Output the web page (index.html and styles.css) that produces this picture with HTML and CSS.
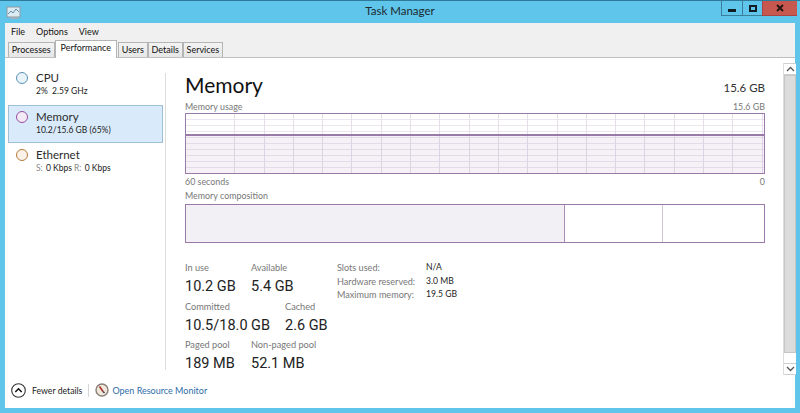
FILE: index.html
```html
<!DOCTYPE html>
<html lang="en">
<head>
<meta charset="utf-8">
<title>Task Manager</title>
<link rel="stylesheet" href="styles.css">
</head>
<body>
<header class="titlebar">
  <div class="title-left">
    <svg class="app-icon" width="16" height="14" viewBox="0 0 16 14"><rect x="1" y="1" width="13" height="10" fill="#dcebf2" stroke="#8b9aa5"/><path d="M2 8l3-3 2 2 3-4 3 3" fill="none" stroke="#5b8fb0"/><rect x="4" y="11" width="8" height="2" fill="#9fb0ba"/></svg>
  </div>
  <div class="title-text">Task Manager</div>
  <div class="controls">
    <div class="ctl"><span class="ctl-min"></span></div>
    <div class="ctl ctl-mx"><span class="ctl-max"></span></div>
    <div class="ctl ctl-close"><svg width="8" height="8" viewBox="0 0 8 8"><path d="M1 1l6 6M7 1l-6 6" stroke="#2a1512" stroke-width="2"/></svg></div>
  </div>
</header>
<div class="window">
  <nav class="menu"><span>File</span><span>Options</span><span>View</span></nav>
  <div class="tabs">
    <div class="tab">Processes</div>
    <div class="tab active">Performance</div>
    <div class="tab">Users</div>
    <div class="tab">Details</div>
    <div class="tab">Services</div>
  </div>
  <div class="content">
    <aside class="side">
      <div class="item">
        <span class="dot dot-cpu"></span>
        <div><div class="item-name">CPU</div><div class="item-sub">2%&nbsp; 2.59 GHz</div></div>
      </div>
      <div class="item selected">
        <span class="dot dot-mem"></span>
        <div><div class="item-name">Memory</div><div class="item-sub">10.2/15.6 GB (65%)</div></div>
      </div>
      <div class="item">
        <span class="dot dot-eth"></span>
        <div><div class="item-name">Ethernet</div><div class="item-sub"><i>S:</i> 0 Kbps <i>R:</i> 0 Kbps</div></div>
      </div>
    </aside>
    <div class="divider"></div>
    <main class="main">
      <div class="head"><h1>Memory</h1><div class="total">15.6 GB</div></div>
      <div class="cap cap-usage"><span>Memory usage</span><span>15.6 GB</span></div>
      <div class="graph"><div class="graph-fill"></div></div>
      <div class="cap cap-time"><span>60 seconds</span><span>0</span></div>
      <div class="cap cap-comp"><span>Memory composition</span></div>
      <div class="comp"><div class="c1"></div><div class="c2"></div><div class="c3"></div></div>
      <section class="stats">
        <div class="stats-left">
          <div class="srow">
            <div class="stat w66"><div class="lab">In use</div><div class="val">10.2 GB</div></div>
            <div class="stat"><div class="lab">Available</div><div class="val">5.4 GB</div></div>
          </div>
          <div class="srow">
            <div class="stat w100"><div class="lab">Committed</div><div class="val">10.5/18.0 GB</div></div>
            <div class="stat"><div class="lab">Cached</div><div class="val">2.6 GB</div></div>
          </div>
          <div class="srow">
            <div class="stat w66"><div class="lab">Paged pool</div><div class="val">189 MB</div></div>
            <div class="stat"><div class="lab">Non-paged pool</div><div class="val">52.1 MB</div></div>
          </div>
        </div>
        <dl class="stats-right">
          <dt>Slots used:</dt><dd>N/A</dd>
          <dt>Hardware reserved:</dt><dd>3.0 MB</dd>
          <dt>Maximum memory:</dt><dd>19.5 GB</dd>
        </dl>
      </section>
    </main>
    <div class="scroll">
      <div class="sbtn"><svg width="9" height="6" viewBox="0 0 9 6"><path d="M1 5l3.500-3.500L8 5" fill="none" stroke="#555" stroke-width="1.300"/></svg></div>
      <div class="thumb"></div>
      <div class="strack"></div>
      <div class="sbtn"><svg width="9" height="6" viewBox="0 0 9 6"><path d="M1 1l3.500 3.500L8 1" fill="none" stroke="#555" stroke-width="1.300"/></svg></div>
    </div>
  </div>
  <footer class="foot">
    <svg class="chev" width="15" height="15" viewBox="0 0 15 15"><circle cx="7.500" cy="7.500" r="6.800" fill="#fff" stroke="#333" stroke-width="1.100"/><path d="M4.300 9l3.200-3.200L10.700 9" fill="none" stroke="#111" stroke-width="1.500"/></svg>
    <span class="fewer">Fewer details</span>
    <span class="sep"></span>
    <svg class="rm" width="14" height="14" viewBox="0 0 14 14"><circle cx="7" cy="7" r="6" fill="#efe6dc" stroke="#8a7f76" stroke-width="1.400"/><path d="M4.500 3.500L8 8.500" stroke="#a8352c" stroke-width="1.600"/><path d="M8 8.500L9.500 10" stroke="#334" stroke-width="1.200"/></svg>
    <span class="link">Open Resource Monitor</span>
  </footer>
</div>
</body>
</html>
```
FILE: styles.css
```css
* { box-sizing: border-box; }
html, body { margin: 0; padding: 0; }
body {
  width: 800px; height: 413px; overflow: hidden;
  background: #5fc5ea;
  border-top: 1px solid #2e7a9a;
  font-family: Lato, "Open Sans", sans-serif;
  color: #222;
}
.titlebar {
  height: 22px;
  display: grid;
  grid-template-columns: 1fr auto 1fr;
  align-items: start;
}
.title-left { padding: 5px 0 0 6px; height: 22px; }
.app-icon { display: block; }
.title-text { font-size: 11.500px; line-height: 20px; color: #1c2a30; }
.controls { display: flex; justify-content: flex-end; margin-right: 3px; }
.ctl {
  width: 21px; height: 15px;
  border-left: 1px solid #3a7f9c; border-bottom: 1px solid #3a7f9c;
  display: flex; align-items: center; justify-content: center;
}
.ctl-min { display: block; width: 8px; height: 3px; background: #111e26; margin-top: 4px; }
.ctl-mx { width: 20px; }
.ctl-max { display: block; width: 8px; height: 7px; border: 2px solid #111e26; }
.ctl-close { width: 35px; background: #c7584f; border-color: #a44; }
.window {
  margin: 0 5px;
  width: 790px; height: 385px;
  background: #fff;
  display: flex; flex-direction: column;
}
.menu {
  height: 18px; background: #f0f0f0;
  display: flex; gap: 11px; padding-left: 6px;
  font-size: 9px; line-height: 18px; color: #111;
}
.tabs {
  height: 17px; background: #f0f0f0;
  border-bottom: 1px solid #c0c0c0;
  display: flex; align-items: flex-end; padding-left: 3px; flex: none;
}
.tab {
  height: 15px; padding: 0 2.800px;
  border: 1px solid #b4b4b4; border-bottom: 0;
  background: linear-gradient(#f3f3f3, #e6e6e6);
  font-size: 9px; line-height: 14px; color: #111;
}
.tab.active {
  height: 18px; background: #fff; padding: 0 5px; margin-right: 1px;
  line-height: 14px; position: relative; top: 1px;
}
.content { flex: 1; display: flex; min-height: 0; padding-top: 5px; }
.side {
  width: 158px; padding-left: 3px; flex: none; margin-top: 3px;
}
.divider {
  width: 1px; height: 297px; margin: 10px 19px 0 2px; background: #dcdcdc; flex: none;
}
.item {
  width: 155px; height: 38.500px; display: flex; gap: 8px;
  padding: 4px 0 0 7px; border: 1px solid transparent;
}
.item.selected { background: #d9ebfb; border-color: #9dbfd8; }
.dot {
  width: 12px; height: 12px; border-radius: 50%;
  border: 1.300px solid; margin-top: 1px; flex: none;
}
.dot-cpu { border-color: #5a93b9; background: #eaf3f9; }
.dot-mem { border-color: #94509f; background: #f4eaf6; }
.dot-eth { border-color: #b87a3a; background: #fbf3ea; }
.item-name { font-size: 11.500px; line-height: 14px; color: #2b2b2b; }
.item-sub { font-size: 8.500px; line-height: 12px; color: #222; }
.item-sub i { font-style: normal; color: #888; margin-right: 1px; }
.main { width: 580px; flex: none; padding-top: 6px; }
.head { display: flex; justify-content: space-between; align-items: flex-end; height: 31px; }
h1 { margin: 0; font-weight: 400; font-size: 21px; line-height: 31px; color: #111; }
.total { font-size: 11.500px; line-height: 14px; color: #333; padding-bottom: 5px; }
.cap { display: flex; justify-content: space-between; font-size: 8.900px; line-height: 12px; color: #777; }
.cap-usage { margin-top: 1px; }
.graph {
  height: 61px; border: 1.300px solid #9a7aa8;
  position: relative;
  background:
    repeating-linear-gradient(90deg, transparent 0 28.300px, #e6dfe9 28.300px 29.300px) 20px 0,
    repeating-linear-gradient(180deg, transparent 0 5px, #ece7ee 5px 6px);
}
.graph-fill {
  position: absolute; left: 0; right: 0; top: 20px; bottom: 0;
  border-top: 2px solid #9a7aa8;
  background: rgba(148, 100, 165, .09);
}
.cap-time { margin-top: 2px; }
.cap-comp { margin-top: 2px; }
.comp {
  height: 39px; margin-top: 2px; border: 1.300px solid #9a7aa8;
  display: flex;
}
.c1 { width: 379px; background: #f3f0f5; border-right: 1px solid #a98db5; }
.c2 { width: 98px; border-right: 1px solid #cfc8d3; }
.c3 { flex: 1; }
.stats { display: flex; margin-top: 19px; }
.stats-left { width: 152px; flex: none; }
.srow { display: flex; height: 38.500px; white-space: nowrap; }
.stat { flex: none; }
.w66 { width: 66px; }
.w100 { width: 100px; }
.lab { font-size: 9.200px; line-height: 12px; color: #777; }
.val { font-family: Roboto, Lato, sans-serif; font-size: 14.500px; line-height: 21px; color: #222; margin-top: 2px; }
.stats-right {
  margin: -1px 0 0; display: grid;
  grid-template-columns: 89px auto; grid-auto-rows: 13.500px;
  align-content: start; font-size: 9.100px; line-height: 13.500px;
}
dt { color: #777; }
dd { margin: 0; color: #222; font-size: 8.600px; }
.scroll {
  width: 13px; margin-left: 18px; height: 312px;
  background: #f0f0f0; border-left: 1px solid #dcdcdc;
  display: flex; flex-direction: column; flex: none;
}
.sbtn { height: 12px; background: #fff; border-bottom: 1px solid #cfcfcf; border-top: 1px solid #cfcfcf; display: flex; align-items: center; justify-content: center; flex: none; }
.thumb { height: 278px; background: #dcdcdc; border: 1px solid #c6c6c6; flex: none; }
.strack { flex: 1; background: #fff; }
.foot {
  height: 32px; flex: none; display: flex; align-items: center;
  padding: 0 0 4px 6px;
}
.fewer { font-size: 8.700px; margin-left: 6px; color: #222; }
.sep { width: 1px; height: 13px; background: #d6d6d6; margin: 0 6px; }
.rm { margin-right: 3px; }
.link { font-size: 9px; color: #2f6da8; }
```
